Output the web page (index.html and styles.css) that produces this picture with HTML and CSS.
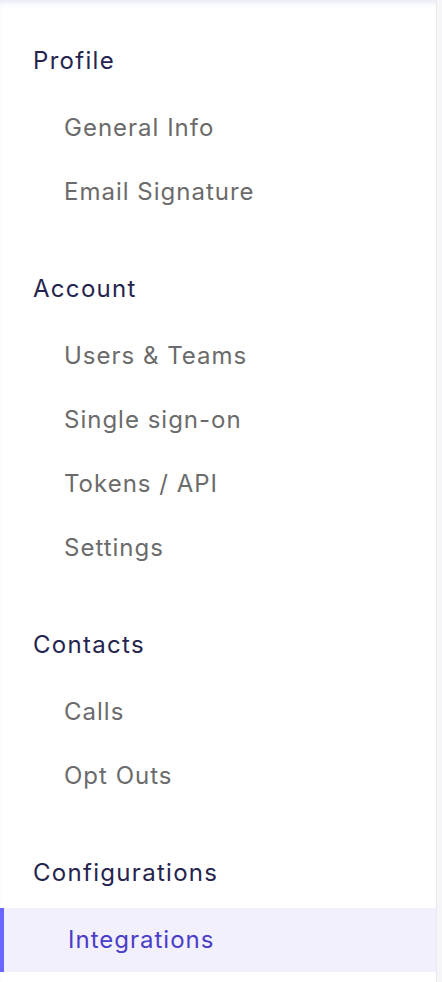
FILE: index.html
```html
<!DOCTYPE html>
<html lang="en">

<head>
    <meta charset="UTF-8">
    <meta name="viewport" content="width=device-width, initial-scale=1.0">
    <title>Settings</title>
    <link rel="stylesheet" href="styles.css">
</head>

<body>
    <nav class="sidebar">
        <div class="section">
            <div class="section-title">Profile</div>
            <a class="nav-item">General Info</a>
            <a class="nav-item">Email Signature</a>
        </div>
        <div class="section">
            <div class="section-title">Account</div>
            <a class="nav-item">Users &amp; Teams</a>
            <a class="nav-item">Single sign-on</a>
            <a class="nav-item">Tokens / API</a>
            <a class="nav-item">Settings</a>
        </div>
        <div class="section">
            <div class="section-title">Contacts</div>
            <a class="nav-item">Calls</a>
            <a class="nav-item">Opt Outs</a>
        </div>
        <div class="section">
            <div class="section-title">Configurations</div>
            <a class="nav-item active">Integrations</a>
        </div>
    </nav>
</body>

</html>
```
FILE: styles.css
```css
body {
    margin: 0;
    background: #f6f6f8;
    font-family: Inter, "Noto Sans", sans-serif;
}

.sidebar {
    width: 437px;
    height: 982px;
    box-sizing: border-box;
    padding-top: 32px;
    background: #fff;
    border-right: 1px solid #e9e9ee;
    box-shadow: inset 0 6px 6px -4px rgba(220, 222, 240, 0.8);
}

.section {
    margin-bottom: 36px;
}

.section-title {
    height: 64px;
    line-height: 58px;
    padding-left: 33px;
    font-size: 24px;
    letter-spacing: 1.3px;
    color: #25244f;
}

.nav-item {
    display: block;
    height: 64px;
    line-height: 64px;
    padding-left: 64px;
    font-size: 24px;
    letter-spacing: 1px;
    color: #6b6b6b;
}

.nav-item.active {
    border-left: 4px solid #6b66ff;
    background: #f1f0fc;
    color: #4b3cc9;
}
```
